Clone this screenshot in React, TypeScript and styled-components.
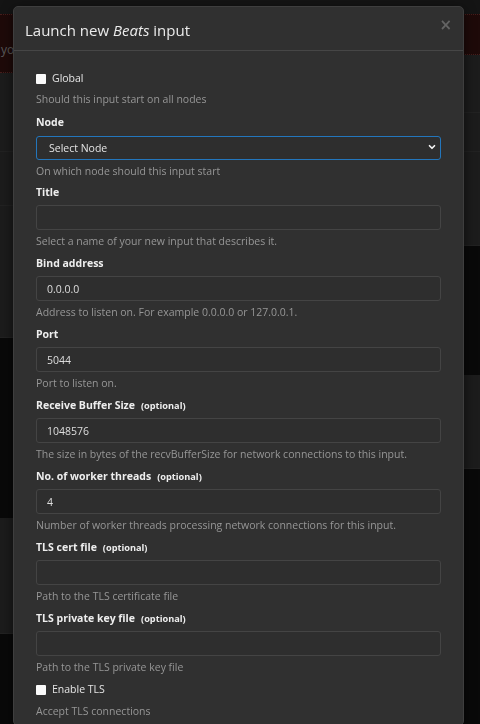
import styled, { createGlobalStyle } from "styled-components";
import { ChevronDown } from "lucide-react";

const GlobalStyle = createGlobalStyle`
    html, body {
        margin: 0;
        padding: 0;
        background: rgb(10, 10, 10);
        font-family: "Open Sans", "Noto Sans", sans-serif;
        overflow: hidden;
    }
    * {
        box-sizing: border-box;
    }
`;

// page behind the modal (only the edges show)
const Page = styled.div`
    display: grid;
    grid-template-columns: 1fr 1fr;
    height: 724px;
`;

const PageColumn = styled.div`
    display: flex;
    flex-direction: column;
`;

const Band = styled.div<{ $h: number; $tone: "nav" | "alert" | "panel" | "void" }>`
    height: ${({ $h }) => `${$h}px`};
    flex-shrink: 0;
    background-color: ${({ $tone }) => {
        if ($tone === "nav") return "rgb(20, 20, 20)";
        if ($tone === "alert") return "rgb(30, 10, 9)";
        if ($tone === "panel") return "rgb(28, 28, 28)";
        return "rgb(9, 9, 9)";
    }};
    border-top: ${({ $tone }) =>
        $tone === "alert" ? "1px dotted rgb(70, 30, 28)" : "none"};
    border-bottom: ${({ $tone }) =>
        $tone === "alert"
            ? "1px dotted rgb(70, 30, 28)"
            : $tone === "panel"
            ? "1px solid rgb(34, 34, 34)"
            : "none"};
    color: rgb(90, 90, 90);
    font-size: 12px;
    display: flex;
    align-items: flex-end;
    padding: 0 0 14px 1px;
`;

const Modal = styled.div`
    position: fixed;
    top: 6px;
    left: 13px;
    width: 451px;
    background-color: rgb(48, 48, 48);
    border: 1px solid rgb(62, 62, 62);
    border-radius: 5px;
    box-shadow: 0 3px 12px rgba(0, 0, 0, 0.6);
`;

const ModalHeader = styled.div`
    display: flex;
    align-items: center;
    justify-content: space-between;
    height: 44px;
    padding: 0 11px 0 11px;
    border-bottom: 1px solid rgb(70, 70, 70);
`;

const ModalTitle = styled.h4`
    margin: 0;
    font-size: 15px;
    font-weight: 400;
    color: rgb(235, 235, 235);
    padding-top: 2px;

    em {
        font-style: italic;
    }
`;

const CloseButton = styled.button`
    border: none;
    background: none;
    padding: 0;
    margin-top: -6px;
    color: rgb(100, 100, 100);
    font-family: "DejaVu Sans", sans-serif;
    font-size: 15px;
    font-weight: bold;
    line-height: 1;
    cursor: pointer;
`;

const ModalBody = styled.div`
    padding: 19px 22px 0;
    display: flex;
    flex-direction: column;
`;

const FieldGroup = styled.div<{ $after?: number }>`
    display: flex;
    flex-direction: column;
    margin-bottom: ${({ $after }) => `${$after ?? 6}px`};
`;

const CheckRow = styled.label`
    display: flex;
    align-items: center;
    gap: 6px;
    height: 16px;
    font-size: 10.5px;
    color: rgb(228, 228, 228);
`;

const CheckBox = styled.input`
    appearance: none;
    margin: 0;
    width: 10px;
    height: 10px;
    background: rgb(250, 250, 250);
    border-radius: 1px;
    margin-top: 1px;
`;

const Label = styled.label`
    display: flex;
    align-items: baseline;
    height: 16px;
    line-height: 16px;
    margin-bottom: 5px;
    font-size: 10.5px;
    font-weight: 700;
    color: rgb(238, 238, 238);
`;

const Optional = styled.span`
    margin-left: 6px;
    font-size: 9.2px;
    font-weight: 700;
`;

const TextInput = styled.input`
    height: 25px;
    width: 100%;
    padding: 0 10px;
    background-color: rgb(46, 46, 46);
    border: 1px solid rgb(68, 68, 68);
    border-radius: 3px;
    color: rgb(222, 222, 222);
    font-family: inherit;
    font-size: 10.5px;
    outline: none;
`;

const SelectWrap = styled.div`
    position: relative;
`;

const Select = styled.select`
    appearance: none;
    height: 24px;
    width: 100%;
    padding: 0 12px;
    background-color: rgb(46, 46, 46);
    border: 1px solid rgb(35, 118, 188);
    border-radius: 3px;
    color: rgb(228, 228, 228);
    font-family: inherit;
    font-size: 10.5px;
    outline: none;
`;

const Chevron = styled(ChevronDown)`
    position: absolute;
    right: 4px;
    top: 7px;
    color: rgb(245, 245, 245);
    pointer-events: none;
`;

const Help = styled.span<{ $gap?: number }>`
    display: block;
    height: 16px;
    line-height: 16px;
    margin-top: ${({ $gap }) => `${$gap ?? 3}px`};
    font-size: 10.5px;
    color: rgb(150, 150, 150);
`;

type Field = {
    label: string;
    value: string;
    help: string;
    optional?: boolean;
};

const fields: Field[] = [
    { label: "Title", value: "", help: "Select a name of your new input that describes it." },
    { label: "Bind address", value: "0.0.0.0", help: "Address to listen on. For example 0.0.0.0 or 127.0.0.1." },
    { label: "Port", value: "5044", help: "Port to listen on." },
    {
        label: "Receive Buffer Size",
        value: "1048576",
        help: "The size in bytes of the recvBufferSize for network connections to this input.",
        optional: true,
    },
    {
        label: "No. of worker threads",
        value: "4",
        help: "Number of worker threads processing network connections for this input.",
        optional: true,
    },
    { label: "TLS cert file", value: "", help: "Path to the TLS certificate file", optional: true },
    { label: "TLS private key file", value: "", help: "Path to the TLS private key file", optional: true },
];

function App() {
    return (
        <>
            <GlobalStyle />
            <Page>
                <PageColumn>
                    <Band $h={8} $tone="nav" />
                    <Band $h={59} $tone="alert">
                        you
                    </Band>
                    <Band $h={79} $tone="panel" />
                    <Band $h={54} $tone="panel" />
                    <Band $h={132} $tone="panel" />
                    <Band $h={180} $tone="void" />
                    <Band $h={116} $tone="panel" />
                    <Band $h={96} $tone="void" />
                </PageColumn>
                <PageColumn>
                    <Band $h={7} $tone="nav" />
                    <Band $h={41} $tone="alert" />
                    <Band $h={58} $tone="panel" />
                    <Band $h={39} $tone="panel" />
                    <Band $h={94} $tone="panel" />
                    <Band $h={129} $tone="void" />
                    <Band $h={94} $tone="panel" />
                    <Band $h={262} $tone="void" />
                </PageColumn>
            </Page>

            <Modal>
                <ModalHeader>
                    <ModalTitle>
                        Launch new <em>Beats</em> input
                    </ModalTitle>
                    <CloseButton>×</CloseButton>
                </ModalHeader>
                <ModalBody>
                    <FieldGroup $after={7}>
                        <CheckRow>
                            <CheckBox type="checkbox" />
                            Global
                        </CheckRow>
                        <Help $gap={5}>Should this input start on all nodes</Help>
                    </FieldGroup>

                    <FieldGroup $after={5}>
                        <Label>Node</Label>
                        <SelectWrap>
                            <Select defaultValue="">
                                <option value="">Select Node</option>
                            </Select>
                            <Chevron size={10} strokeWidth={4} />
                        </SelectWrap>
                        <Help>On which node should this input start</Help>
                    </FieldGroup>

                    {fields.map((field) => (
                        <FieldGroup key={field.label}>
                            <Label>
                                {field.label}
                                {field.optional && <Optional>(optional)</Optional>}
                            </Label>
                            <TextInput defaultValue={field.value} />
                            <Help>{field.help}</Help>
                        </FieldGroup>
                    ))}

                    <FieldGroup>
                        <CheckRow>
                            <CheckBox type="checkbox" />
                            Enable TLS
                        </CheckRow>
                        <Help $gap={6}>Accept TLS connections</Help>
                    </FieldGroup>
                </ModalBody>
            </Modal>
        </>
    );
}

export default App;
